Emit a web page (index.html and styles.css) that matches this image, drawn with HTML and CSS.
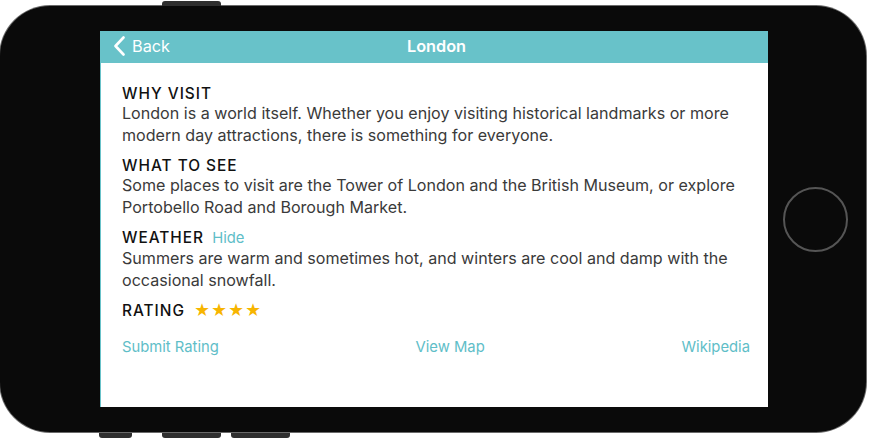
FILE: index.html
```html
<!DOCTYPE html>
<html>
<head>
<meta charset="utf-8">
<link rel="stylesheet" href="styles.css">
</head>
<body>
<div class="stage">
  <div class="phone">
    <span class="btn btn-top"></span>
    <span class="btn btn-b1"></span>
    <span class="btn btn-b2"></span>
    <span class="btn btn-b3"></span>
    <div class="screen">
      <div class="nav">
        <div class="back">
          <svg width="13" height="20" viewBox="0 0 13 20"><path d="M10.5 1.5 L2.5 10 L10.5 18.5" fill="none" stroke="#fff" stroke-width="2.6" stroke-linecap="round" stroke-linejoin="round"/></svg>
          <span>Back</span>
        </div>
        <div class="title">London</div>
        <div></div>
      </div>
      <div class="content">
        <div class="section">
          <div class="heading">WHY VISIT</div>
          <p>London is a world itself. Whether you enjoy visiting historical landmarks or more modern day attractions, there is something for everyone.</p>
        </div>
        <div class="section">
          <div class="heading">WHAT TO SEE</div>
          <p>Some places to visit are the Tower of London and the British Museum, or explore Portobello Road and Borough Market.</p>
        </div>
        <div class="section">
          <div class="heading">WEATHER <span class="link hide">Hide</span></div>
          <p>Summers are warm and sometimes hot, and winters are cool and damp with the occasional snowfall.</p>
        </div>
        <div class="section">
          <div class="heading">RATING <span class="stars">★★★★</span></div>
        </div>
        <div class="links">
          <span class="link">Submit Rating</span>
          <span class="link">View Map</span>
          <span class="link">Wikipedia</span>
        </div>
      </div>
    </div>
    <div class="home"></div>
  </div>
</div>
</body>
</html>
```
FILE: styles.css
```css
html, body {
  margin: 0;
  padding: 0;
  background: #fff;
}
.stage {
  width: 870px;
  height: 444px;
  padding-top: 6px;
  box-sizing: border-box;
}
.phone {
  position: relative;
  width: 866px;
  height: 426px;
  background: #0a0a0a;
  border-radius: 50px;
  box-shadow: 0 0 0 1px #6a6a6a;
  display: flex;
  align-items: center;
  padding-left: 100px;
  box-sizing: border-box;
}
.btn {
  position: absolute;
  background: #2f2f2f;
  height: 5px;
}
.btn-top { top: -5px; left: 162px; width: 59px; border-radius: 3px 3px 0 0; }
.btn-b1 { bottom: -6px; left: 99px; width: 33px; border-radius: 0 0 3px 3px; }
.btn-b2 { bottom: -6px; left: 162px; width: 59px; border-radius: 0 0 3px 3px; }
.btn-b3 { bottom: -6px; left: 231px; width: 59px; border-radius: 0 0 3px 3px; }
.screen {
  width: 668px;
  height: 376px;
  background: #fff;
  border-left: 1px solid #68c2c9;
  box-sizing: border-box;
  display: flex;
  flex-direction: column;
  font-family: "Inter", "Liberation Sans", sans-serif;
}
.nav {
  height: 32px;
  background: #68c2c9;
  display: grid;
  grid-template-columns: 1fr auto 1fr;
  align-items: center;
  color: #fff;
  font-size: 16.3px;
  margin-left: -1px;
  padding-bottom: 2px;
  box-sizing: border-box;
}
.back {
  display: flex;
  align-items: center;
  gap: 6px;
  padding-left: 13px;
}
.back svg { display: block; }
.title {
  font-weight: 600;
  padding-left: 5px;
}
.content {
  padding: 21px 18px 0 21px;
}
.section {
  margin-bottom: 10px;
}
.heading {
  font-size: 15.4px;
  font-weight: 500;
  letter-spacing: 1px;
  color: #111;
  line-height: 19px;
}
p {
  margin: 0;
  font-size: 16.1px;
  line-height: 21.5px;
  color: #3a3a3a;
}
.link {
  color: #5fbec8;
  font-size: 14.8px;
  letter-spacing: 0;
  font-weight: 400;
}
.hide {
  margin-left: 3px;
}
.stars {
  color: #f7b500;
  font-size: 15.5px;
  letter-spacing: 0.8px;
  margin-left: 4px;
}
.links {
  display: flex;
  justify-content: space-between;
  margin-top: 18px;
}
.home {
  width: 65px;
  height: 65px;
  border: 2px solid #555;
  border-radius: 50%;
  box-sizing: border-box;
  margin-left: 15px;
}
```
